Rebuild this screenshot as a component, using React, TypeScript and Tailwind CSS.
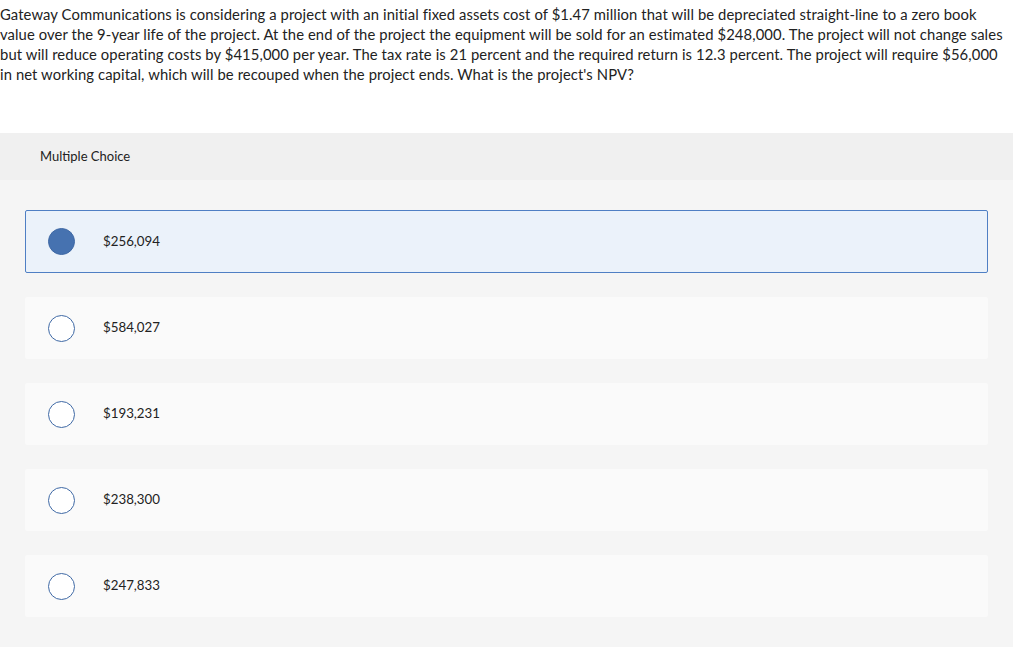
import React from "react";

const options = [
  { label: "$256,094", selected: true },
  { label: "$584,027", selected: false },
  { label: "$193,231", selected: false },
  { label: "$238,300", selected: false },
  { label: "$247,833", selected: false },
];

export default function App() {
  return (
    <div className="w-[1024px] h-[653px] bg-white text-[#222] font-['Lato','Liberation_Sans',sans-serif] overflow-hidden">
      <p className="text-[14.8px] leading-[20px] pt-[4px] m-0 tracking-[0.1px] whitespace-nowrap">
        Gateway Communications is considering a project with an initial fixed assets cost of $1.47 million that will be depreciated straight-line to a zero book
        <br />
        value over the 9-year life of the project. At the end of the project the equipment will be sold for an estimated $248,000. The project will not change sales
        <br />
        but will reduce operating costs by $415,000 per year. The tax rate is 21 percent and the required return is 12.3 percent. The project will require $56,000
        <br />
        in net working capital, which will be recouped when the project ends. What is the project's NPV?
      </p>
      <div className="mt-[49px] w-[1013px] bg-[#f5f5f5]">
        <div className="h-[47px] bg-[#f0f0f0] flex items-center pl-[40px] text-[13px]">Multiple Choice</div>
        <div className="flex flex-col gap-[24px] px-[25px] pt-[30px] pb-[30px]">
          {options.map((o) =>
            o.selected ? (
              <div key={o.label} className="h-[63px] flex items-center bg-[#ebf2fa] border border-[#4f7fc4] rounded-[2px] pl-[22px]">
                <span className="w-[27px] h-[27px] rounded-full bg-[#4672b0] border border-[#3f69a5]" />
                <span className="ml-[28px] text-[13.3px]">{o.label}</span>
              </div>
            ) : (
              <div key={o.label} className="h-[62px] flex items-center bg-[#fafafa] rounded-[2px] pl-[23px]">
                <span className="w-[27px] h-[27px] rounded-full bg-white border border-[#3f69a5]" />
                <span className="ml-[28px] text-[13.3px]">{o.label}</span>
              </div>
            )
          )}
        </div>
      </div>
    </div>
  );
}
